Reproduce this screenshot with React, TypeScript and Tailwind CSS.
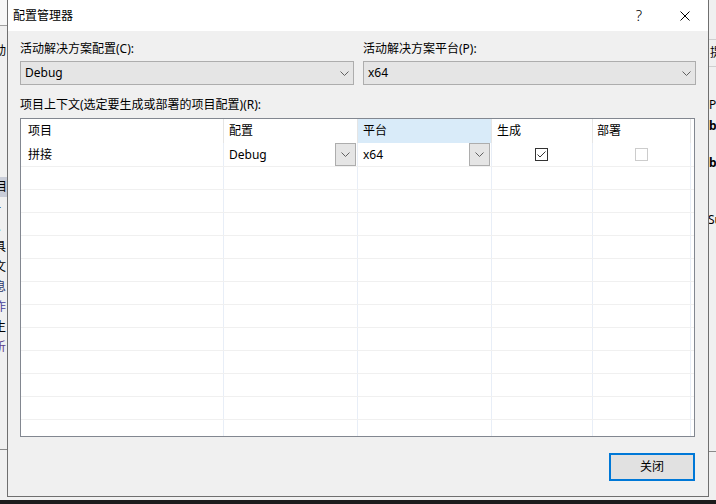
import React from 'react';

const font = "font-['Noto_Sans','Noto_Sans_CJK_SC',sans-serif]";

const Chevron = () => (
  <svg width="9" height="5" viewBox="0 0 9 5" className="block">
    <polyline points="0.5,0.5 4.5,4.5 8.5,0.5" fill="none" stroke="#606060" strokeWidth="1" />
  </svg>
);

const Combo = ({ value }: { value: string }) => (
  <div className="flex h-[24px] items-center justify-between border border-[#adadad] bg-[#e5e5e5] pl-[4px] pr-[4px] text-[12px] text-black">
    <span>{value}</span>
    <Chevron />
  </div>
);

const CellDrop = ({ value }: { value: string }) => (
  <div className="flex h-full items-center justify-between pl-[5px] pr-[1px]">
    <span>{value}</span>
    <div className="flex h-[23px] w-[21px] items-center justify-center border border-[#adadad] bg-[#e5e5e5]">
      <Chevron />
    </div>
  </div>
);

const CheckBox = ({ checked, disabled }: { checked?: boolean; disabled?: boolean }) => (
  <div
    className={
      disabled
        ? 'h-[13px] w-[13px] border border-[#cccccc] bg-white'
        : 'flex h-[13px] w-[13px] items-center justify-center border border-[#333333] bg-white'
    }
  >
    {checked && (
      <svg width="11" height="11" viewBox="0 0 11 11" className="block">
        <polyline points="1.5,5.5 4,8 9.5,2.5" fill="none" stroke="#333333" strokeWidth="1" />
      </svg>
    )}
  </div>
);

const emptyRows = Array.from({ length: 13 }, (_, i) => i);

const LeftStrip = () => (
  <div className={`flex w-[7px] shrink-0 flex-col overflow-hidden text-[12px] text-black ${font}`}>
    <div className="h-[25px] bg-[#f7f7f7]" />
    <div className="h-[1px] bg-[#a0a0a0]" />
    <div className="h-[18px]" />
    <div className="h-[14px] whitespace-nowrap leading-[14px] ml-[-6px]">动</div>
    <div className="h-[119px]" />
    <div className="h-[20px] bg-[#c9cdd8] leading-[20px]">
      <div className="ml-[-5px] whitespace-nowrap">目</div>
    </div>
    <div className="h-[20px] leading-[20px] ml-[-3px] whitespace-nowrap">-</div>
    <div className="h-[20px] leading-[20px] ml-[-2px] whitespace-nowrap text-[#7fc8d8]">.</div>
    <div className="h-[20px] leading-[20px] ml-[-6px] whitespace-nowrap">具</div>
    <div className="h-[20px] leading-[20px] ml-[-6px] whitespace-nowrap">文</div>
    <div className="h-[20px] leading-[20px] ml-[-6px] whitespace-nowrap text-[#2b3a6b]">息</div>
    <div className="h-[20px] leading-[20px] ml-[-6px] whitespace-nowrap text-[#4a3f9a]">作</div>
    <div className="h-[20px] leading-[20px] ml-[-6px] whitespace-nowrap">生</div>
    <div className="h-[20px] leading-[20px] ml-[-6px] whitespace-nowrap text-[#5b3f8c]">析</div>
    <div className="h-[92px]" />
    <div className="h-[1px] bg-[#8a8a8a]" />
  </div>
);

const RightStrip = () => (
  <div className={`flex flex-1 flex-col overflow-hidden text-[12px] text-black ${font}`}>
    <div className="h-[39px]" />
    <div className="h-[1px] bg-[#cfcfcf]" />
    <div className="h-[26px] whitespace-nowrap pl-[1px] leading-[26px]">提</div>
    <div className="h-[1px] bg-[#cfcfcf]" />
    <div className="h-[30px]" />
    <div className="h-[16px] whitespace-nowrap leading-[16px]">Pa</div>
    <div className="h-[5px]" />
    <div className="h-[16px] whitespace-nowrap font-bold leading-[16px]">b</div>
    <div className="h-[21px]" />
    <div className="h-[16px] whitespace-nowrap font-bold leading-[16px]">b</div>
    <div className="h-[41px]" />
    <div className="h-[16px] whitespace-nowrap leading-[16px] ml-[-1px]">Su</div>
    <div className="h-[223px]" />
    <div className="h-[1px] bg-[#8a8a8a]" />
  </div>
);

const Grid = () => (
  <div className="mt-[5px] flex h-[319px] w-[675px] flex-col overflow-hidden border border-[#828790] bg-white text-[12px] text-black">
    <div className="flex h-[24px] shrink-0">
      <div className="flex w-[203px] items-center border-r border-[#e5e5e5] pl-[7px]">项目</div>
      <div className="flex w-[134px] items-center border-r border-[#e5e5e5] pl-[5px]">配置</div>
      <div className="flex w-[134px] items-center border-r border-[#e5e5e5] bg-[#d9ebf9] pl-[5px]">平台</div>
      <div className="flex w-[101px] items-center border-r border-[#e5e5e5] pl-[5px]">生成</div>
      <div className="flex w-[98px] items-center border-r border-[#e5e5e5] pl-[4px]">部署</div>
    </div>
    <div className="flex h-[24px] shrink-0 border-b border-[#f0f0f0]">
      <div className="flex w-[203px] items-center border-r border-[#e8eef7] pl-[7px]">拼接</div>
      <div className="w-[134px] border-r border-[#e8eef7]">
        <CellDrop value="Debug" />
      </div>
      <div className="w-[134px] border-r border-[#e8eef7]">
        <CellDrop value="x64" />
      </div>
      <div className="flex w-[101px] items-center justify-center border-r border-[#e8eef7] pr-[2px]">
        <CheckBox checked />
      </div>
      <div className="flex w-[98px] items-center justify-center border-r border-[#e8eef7]">
        <CheckBox disabled />
      </div>
    </div>
    {emptyRows.map((i) => (
      <div key={i} className="flex h-[23px] shrink-0 border-b border-[#f0f0f0]">
        <div className="w-[203px] border-r border-[#e8eef7]" />
        <div className="w-[134px] border-r border-[#e8eef7]" />
        <div className="w-[134px] border-r border-[#e8eef7]" />
        <div className="w-[101px] border-r border-[#e8eef7]" />
        <div className="w-[98px] border-r border-[#e8eef7]" />
      </div>
    ))}
  </div>
);

export default function App() {
  return (
    <div className={`flex h-[504px] w-[716px] flex-col overflow-hidden bg-[#f0f0f0] ${font}`}>
      <div className="flex h-[500px]">
        <LeftStrip />
        <div className="flex h-[497px] w-[702px] shrink-0 flex-col border-x border-b border-[#6f6f6f] bg-[#f0f0f0]">
          {/* title bar */}
          <div className="flex h-[31px] items-center bg-white text-[12px] text-black">
            <span className="flex-1 pl-[5px]">配置管理器</span>
            <div className="flex h-full w-[46px] items-center justify-center text-[15px] font-light leading-none">?</div>
            <div className="flex h-full w-[46px] items-center justify-center">
              <svg width="10" height="10" viewBox="0 0 10 10" className="block">
                <path d="M0.5 0.5 L9.5 9.5 M9.5 0.5 L0.5 9.5" stroke="#000" strokeWidth="1" />
              </svg>
            </div>
          </div>
          {/* body */}
          <div className="flex flex-col px-[12px] text-[12px] text-black">
            <div className="mt-[10px] flex gap-[9px]">
              <div className="flex w-[334px] flex-col">
                <div className="h-[16px] leading-[16px]">活动解决方案配置(C):</div>
                <div className="mt-[4px]">
                  <Combo value="Debug" />
                </div>
              </div>
              <div className="flex w-[333px] flex-col">
                <div className="h-[16px] leading-[16px]">活动解决方案平台(P):</div>
                <div className="mt-[4px]">
                  <Combo value="x64" />
                </div>
              </div>
            </div>
            <div className="mt-[12px] h-[16px] leading-[16px]">项目上下文(选定要生成或部署的项目配置)(R):</div>
            <Grid />
            <div className="mt-[16px] flex justify-end pr-[1px]">
              <button className="flex h-[28px] w-[86px] items-center justify-center border-2 border-[#0078d7] bg-[#e1e1e1] text-[12px] text-black">
                关闭
              </button>
            </div>
          </div>
        </div>
        <RightStrip />
      </div>
      <div className="flex h-[4px] bg-[#1c1c1c]" />
    </div>
  );
}
